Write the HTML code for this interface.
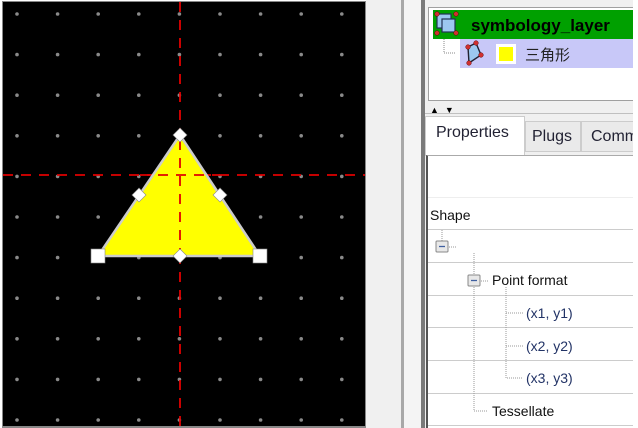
<!DOCTYPE html>
<html><head><meta charset="utf-8"><style>
*{margin:0;padding:0;box-sizing:border-box}
body{width:638px;height:428px;position:relative;overflow:hidden;background:#fff;font-family:"Liberation Sans","Noto Sans CJK SC",sans-serif}
.a{position:absolute}
.t{font-size:14px;color:#111}
</style></head><body>
<div class="a" style="left:0;top:0;width:366px;height:428px;background:#fff"></div>
<svg class="a" style="left:0;top:0" width="366" height="428">
<rect x="2" y="1" width="364" height="427" fill="#888"/>
<rect x="3" y="2" width="362" height="424" fill="#000"/>
<g id="dots" fill="#8a8a8a"></g>
<g stroke="#e00000" stroke-width="1.8" stroke-dasharray="10,8">
<line x1="180" y1="2" x2="180" y2="426"/>
<line x1="3" y1="175" x2="365" y2="175"/>
</g>
<polygon points="180,135 98,256 260,256" fill="#ffff00" stroke="#ccc" stroke-width="2.5"/>
<g stroke="#e00000" stroke-width="1.8" stroke-dasharray="10,8">
<line x1="180" y1="140" x2="180" y2="256"/>
<line x1="140" y1="175" x2="220" y2="175"/>
</g>
<g fill="#fff" stroke="#888" stroke-width="0.6">
<rect x="91" y="249" width="14" height="14"/>
<rect x="253" y="249" width="14" height="14"/>
<polygon points="180,128 187,135 180,142 173,135"/>
<polygon points="139,188 146,195 139,202 132,195"/>
<polygon points="220,188 227,195 220,202 213,195"/>
<polygon points="180,249 187,256 180,263 173,256"/>
</g>
</svg>
<div class="a" style="left:366px;top:0;width:35px;height:428px;background:#f0f0f0"></div>
<div class="a" style="left:401px;top:0;width:3px;height:428px;background:#a8a8a8"></div>
<div class="a" style="left:404px;top:0;width:17px;height:428px;background:#f4f4f4"></div>
<div class="a" style="left:421px;top:0;width:4px;height:428px;background:#7a7a7a"></div>
<div class="a" style="left:425px;top:0;width:213px;height:428px;background:#f0f0f0"></div>
<div class="a" style="left:428px;top:7px;width:210px;height:94px;background:#fff;border:1px solid #a0a0a0;border-right:none"></div>
<div class="a" style="left:433px;top:10px;width:200px;height:29px;background:#00a000"></div>
<div class="a" style="left:460px;top:39px;width:173px;height:29px;background:#c8c8f8"></div>
<svg class="a" style="left:433px;top:10px" width="30" height="60">
<rect x="4" y="4" width="14" height="14" fill="#9cc8f0" stroke="#235" stroke-width="1.2"/>
<rect x="9" y="9" width="13" height="13" fill="#9cc8f0" stroke="#235" stroke-width="1.2"/>
<g fill="#d03030" stroke="#600" stroke-width="0.5"><circle cx="4" cy="4" r="2.3"/><circle cx="23" cy="4" r="2.3"/><circle cx="4" cy="23" r="2.3"/><circle cx="23" cy="23" r="2.3"/></g>
<path d="M11 29 V43 H22" stroke="#888" stroke-dasharray="1,1" fill="none"/>
</svg>
<svg class="a" style="left:464px;top:39px" width="28" height="29">
<polygon points="4,8 12,4 17,16 5,24" fill="#9cc8f0" stroke="#223" stroke-width="1.4"/>
<g fill="#d03030" stroke="#600" stroke-width="0.5"><circle cx="4" cy="8" r="2.3"/><circle cx="12" cy="4" r="2.3"/><circle cx="17" cy="16" r="2.3"/><circle cx="5" cy="24" r="2.3"/></g>
</svg>
<div class="a" style="left:496px;top:44px;width:20px;height:20px;background:#fff"></div>
<div class="a" style="left:499px;top:47px;width:14px;height:14px;background:#ffff00"></div>
<div class="a" style="left:471px;top:16px;font-size:17px;font-weight:bold;color:#000">symbology_layer</div>
<div class="a" style="left:525px;top:44px;font-size:15px;color:#222">三角形</div>
<div class="a" style="left:430px;top:105px;font-size:9px;color:#000;letter-spacing:6px">▲▼</div>
<div class="a" style="left:425px;top:113px;width:213px;height:1px;background:#c0c0c0"></div>
<div class="a" style="left:425px;top:116px;width:100px;height:40px;background:#fff;border:1px solid #ccc;border-bottom:none"></div>
<div class="a" style="left:525px;top:121px;width:56px;height:31px;background:#eaeaea;border:1px solid #ccc"></div>
<div class="a" style="left:581px;top:121px;width:57px;height:31px;background:#eaeaea;border:1px solid #ccc;border-right:none"></div>
<div class="a" style="left:436px;top:124px;font-size:16px;color:#223">Properties</div>
<div class="a" style="left:532px;top:128px;font-size:16px;color:#223">Plugs</div>
<div class="a" style="left:591px;top:128px;font-size:16px;color:#223">Comm</div>
<div class="a" style="left:426px;top:155px;width:212px;height:273px;background:#fff;border-left:2px solid #555;border-top:1px solid #aaa"></div>
<div class="a" style="left:428px;top:197px;width:210px;height:1px;background:#eee"></div>
<div class="a" style="left:428px;top:229px;width:210px;height:1px;background:#ccc"></div>
<div class="a" style="left:428px;top:262px;width:210px;height:1px;background:#ccc"></div>
<div class="a" style="left:428px;top:295px;width:210px;height:1px;background:#ccc"></div>
<div class="a" style="left:428px;top:327px;width:210px;height:1px;background:#ccc"></div>
<div class="a" style="left:428px;top:360px;width:210px;height:1px;background:#ccc"></div>
<div class="a" style="left:428px;top:393px;width:210px;height:1px;background:#ccc"></div>
<div class="a" style="left:428px;top:425px;width:210px;height:1px;background:#ccc"></div>
<svg class="a" style="left:428px;top:198px" width="120" height="230">
<g stroke="#999" stroke-dasharray="1,1" fill="none">
<path d="M14 32 V43"/><path d="M21 49 H29"/>
<path d="M46 55 V213 H60"/><path d="M53 83 H61"/>
<path d="M78 89 V180 H95"/><path d="M78 115 H95"/><path d="M78 148 H95"/>
</g>
<rect x="8" y="43" width="12" height="11" rx="1" fill="#e8e8e8" stroke="#888"/>
<line x1="11" y1="48.5" x2="17" y2="48.5" stroke="#4060a0" stroke-width="1.3"/>
<rect x="40" y="77" width="12" height="11" rx="1" fill="#e8e8e8" stroke="#888"/>
<line x1="43" y1="82.5" x2="49" y2="82.5" stroke="#4060a0" stroke-width="1.3"/>
</svg>
<div class="a t" style="left:430px;top:207px">Shape</div>
<div class="a t" style="left:492px;top:272px">Point format</div>
<div class="a t" style="left:526px;top:305px;color:#223366">(x1, y1)</div>
<div class="a t" style="left:526px;top:338px;color:#223366">(x2, y2)</div>
<div class="a t" style="left:526px;top:370px;color:#223366">(x3, y3)</div>
<div class="a t" style="left:492px;top:403px">Tessellate</div>
<div class="a" style="left:633px;top:0;width:5px;height:428px;background:#fff"></div>
<script>
var g=document.getElementById('dots'),s='';
for(var x=17;x<366;x+=40.6)for(var y=14;y<426;y+=40.6)s+='<circle cx="'+x+'" cy="'+y+'" r="1.8"/>';
g.innerHTML=s;
</script>
</body></html>
